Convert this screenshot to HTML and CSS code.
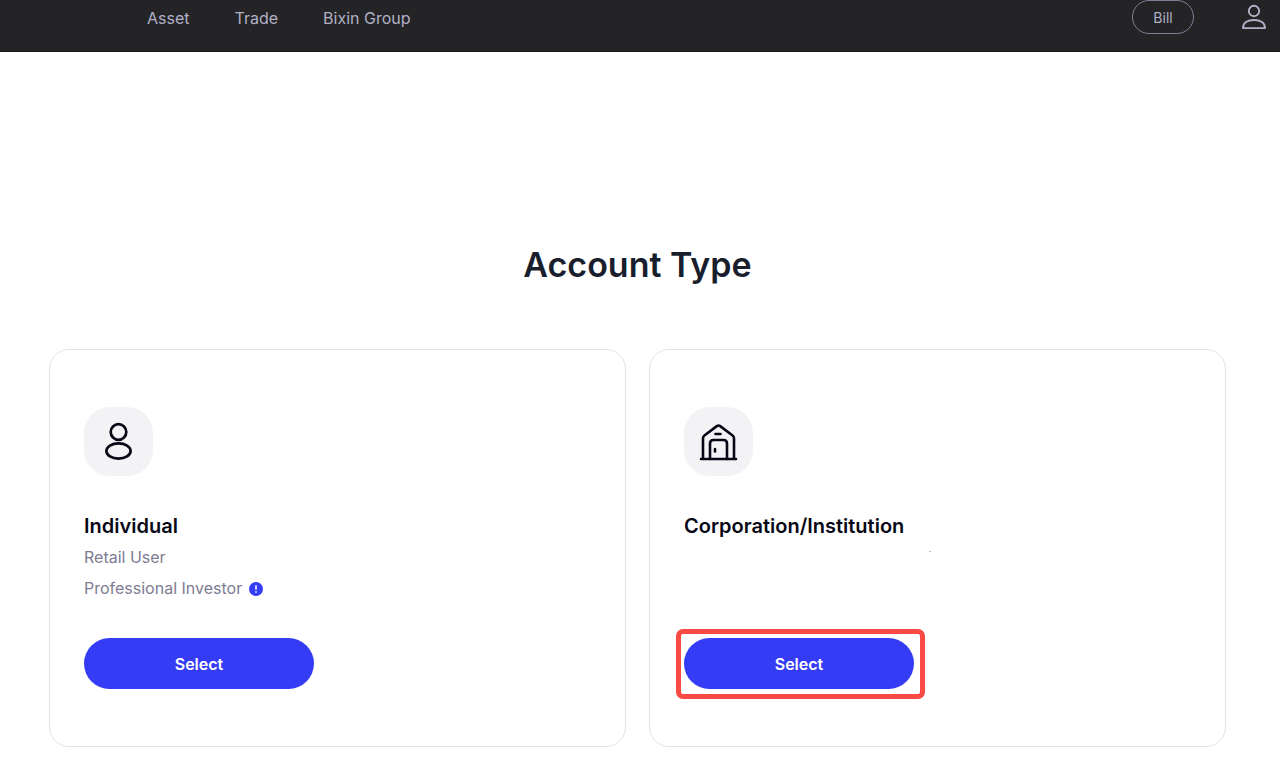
FILE: index.html
```html
<!DOCTYPE html>
<html lang="en">
<head>
<meta charset="utf-8">
<meta name="viewport" content="width=device-width, initial-scale=1">
<title>Account Type</title>
<link rel="stylesheet" href="styles.css">
</head>
<body>
<header class="topbar">
  <nav class="nav">
    <a href="#">Asset</a>
    <a href="#">Trade</a>
    <a href="#">Bixin Group</a>
  </nav>
  <div class="actions">
    <button class="bill" type="button">Bill</button>
    <button class="profile" type="button" aria-label="Profile">
      <svg width="26" height="26" viewBox="0 0 26 26" fill="none" stroke="currentColor" stroke-width="1.9">
        <circle cx="13" cy="7" r="5.200"/>
        <path d="M2 24.100C2 19 6.500 16 13 16s11 3 11 8.100Z" stroke-linejoin="round"/>
      </svg>
    </button>
  </div>
</header>
<main class="page">
  <h1 class="heading">Account Type</h1>
  <div class="cards">
    <section class="card">
      <div class="badge">
        <svg width="69" height="69" viewBox="0 0 69 69" fill="none" stroke="currentColor" stroke-width="2.7">
          <circle cx="34.500" cy="25" r="7.800"/>
          <ellipse cx="34.500" cy="44" rx="12.100" ry="7.700"/>
        </svg>
      </div>
      <h2 class="name">Individual</h2>
      <ul class="kinds">
        <li>Retail User</li>
        <li>Professional Investor
          <svg class="info" width="14" height="14" viewBox="0 0 14 14" aria-hidden="true">
            <circle cx="7" cy="7" r="7" fill="#343cf5"/>
            <path d="M7 3.200v4.600M7 9.200v1.500" stroke="#fff" stroke-width="1.500"/>
          </svg>
        </li>
      </ul>
      <button class="select" type="button">Select</button>
    </section>
    <section class="card">
      <div class="badge">
        <svg width="69" height="69" viewBox="0 0 69 69" fill="none" stroke="currentColor" stroke-width="2.6" stroke-linecap="round" stroke-linejoin="round">
          <path d="M17 52h35M19 52V31.200q0-1.700 1.400-2.700l12.400-9.400q1.700-1.200 3.400 0l12.400 9.400q1.400 1 1.400 2.700V52"/>
          <path d="M26 52V36.500q0-3.500 3.500-3.500h10q3.500 0 3.500 3.500V52M31.500 27h5M31 42v2.500"/>
        </svg>
      </div>
      <h2 class="name">Corporation/Institution</h2>
      <span class="speck"></span>
      <button class="select highlighted" type="button">Select</button>
    </section>
  </div>
</main>
</body>
</html>
```
FILE: styles.css
```css
* {
  box-sizing: border-box;
}

body {
  margin: 0;
  background: #fff;
  color: #070816;
  font-family: Inter, "Liberation Sans", sans-serif;
}

button {
  font: inherit;
  cursor: pointer;
}

.topbar {
  display: flex;
  justify-content: space-between;
  height: 52px;
  padding: 0 13px 0 147px;
  background: #242426;
  border-bottom: 1px solid #19191b;
  color: #b1b0c7;
}

.nav {
  display: flex;
  gap: 45px;
  font-size: 16px;
  line-height: 36px;
}

.nav a {
  color: inherit;
  text-decoration: none;
}

.actions {
  display: flex;
  align-items: flex-start;
  gap: 47px;
}

.bill {
  width: 62px;
  height: 34px;
  padding: 0;
  border: 1px solid #817f94;
  border-radius: 17px;
  background: none;
  color: inherit;
  font-size: 14px;
}

.profile {
  display: flex;
  padding: 4px 0;
  border: 0;
  background: none;
  color: inherit;
}

.page {
  padding: 189px 54px 28px 49px;
}

.heading {
  margin: 0 0 60px;
  color: #191e2d;
  font-size: 34px;
  font-weight: 600;
  line-height: 48px;
  text-align: center;
}

.cards {
  display: grid;
  grid-template-columns: 1fr 1fr;
  gap: 23px;
}

.card {
  position: relative;
  display: flex;
  flex-direction: column;
  align-items: flex-start;
  padding: 57px 34px;
  border: 1px solid #e2e1ed;
  border-radius: 20px;
}

.badge {
  display: flex;
  border-radius: 26px;
  background: #f3f3f6;
}

.name {
  margin: 34px 0 0;
  font-size: 20px;
  font-weight: 600;
  line-height: 32px;
}

.kinds {
  margin: 0 0 34px;
  padding: 0;
  list-style: none;
  color: #7e7c92;
  font-size: 16px;
  line-height: 31px;
}

.kinds li {
  display: flex;
  align-items: center;
  gap: 7px;
}

.select {
  width: 230px;
  height: 51px;
  margin-top: auto;
  border: 0;
  border-radius: 26px;
  background: #343cf5;
  color: #fff;
  font-size: 16px;
  font-weight: 600;
}

.highlighted {
  position: relative;
}

.highlighted::after {
  content: "";
  position: absolute;
  inset: -9px -11px -10px -8px;
  border: 5px solid #f94a46;
  border-radius: 7px;
}

.speck {
  position: absolute;
  top: 201px;
  left: 279px;
  width: 2px;
  height: 1px;
  background: #b8b8b8;
}
```
